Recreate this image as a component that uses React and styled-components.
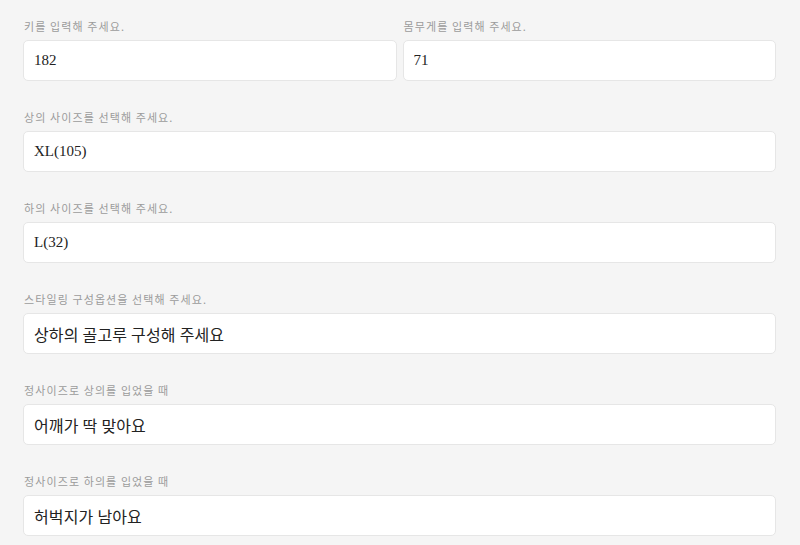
import React from "react";
import styled, { createGlobalStyle } from "styled-components";

const GlobalStyle = createGlobalStyle`
    html, body {
        margin: 0;
        padding: 0;
        background-color: #f5f5f5;
    }
    * {
        box-sizing: border-box;
    }
`;

const Page = styled.div`
    padding: 18px 24px 20px 23px;
    display: flex;
    flex-direction: column;
    gap: 28px;
    font-family: "Liberation Serif", "Noto Sans CJK KR", serif;
`;

const Row = styled.div`
    display: grid;
    grid-template-columns: 1fr 1fr;
    gap: 6px;
`;

const Field = styled.div`
    display: flex;
    flex-direction: column;
`;

const Label = styled.label`
    display: block;
    height: 16px;
    line-height: 16px;
    margin: 0 0 6px 1px;
    font-family: "Noto Sans CJK KR", sans-serif;
    font-size: 11px;
    letter-spacing: 1.1px;
    color: #9b9b9b;
`;

const Input = styled.input`
    width: 100%;
    height: 41px;
    padding: 0 10px;
    border: 1px solid #e6e6e6;
    border-radius: 5px;
    background-color: #fff;
    color: #222;
    font-family: "Liberation Serif", "Noto Sans CJK KR", serif;
    font-size: ${props => props.$hangul ? '16px' : '15px'};
    letter-spacing: ${props => props.$hangul ? '0.1px' : '0'};
    outline: none;
`;

const fields = [
    { label: '상의 사이즈를 선택해 주세요.', value: 'XL(105)' },
    { label: '하의 사이즈를 선택해 주세요.', value: 'L(32)' },
    { label: '스타일링 구성옵션을 선택해 주세요.', value: '상하의 골고루 구성해 주세요', hangul: true },
    { label: '정사이즈로 상의를 입었을 때', value: '어깨가 딱 맞아요', hangul: true },
    { label: '정사이즈로 하의를 입었을 때', value: '허벅지가 남아요', hangul: true },
];

export default function App() {
    return (
        <>
            <GlobalStyle />
            <Page>
                <Row>
                    <Field>
                        <Label>키를 입력해 주세요.</Label>
                        <Input defaultValue="182" />
                    </Field>
                    <Field>
                        <Label>몸무게를 입력해 주세요.</Label>
                        <Input defaultValue="71" />
                    </Field>
                </Row>
                {fields.map(f => (
                    <Field key={f.label}>
                        <Label>{f.label}</Label>
                        <Input defaultValue={f.value} $hangul={f.hangul} readOnly />
                    </Field>
                ))}
            </Page>
        </>
    );
}
